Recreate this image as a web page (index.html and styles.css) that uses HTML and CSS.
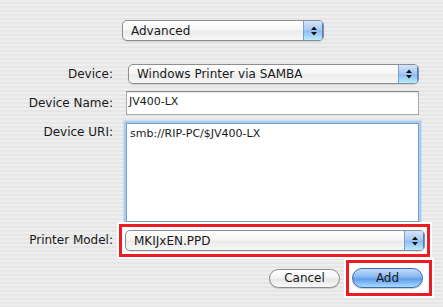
FILE: index.html
```html
<!DOCTYPE html>
<html>
<head>
<meta charset="utf-8">
<link rel="stylesheet" href="styles.css">
</head>
<body>
<div class="sheet">
  <div class="top-row">
    <div class="popup popup-advanced">
      <span class="popup-text">Advanced</span>
      <span class="popup-arrows"><svg width="8" height="12" viewBox="0 0 8 12"><path d="M4 1.5 L7 5 L1 5 Z M1 7 L7 7 L4 10.5 Z" fill="#111"/></svg></span>
    </div>
  </div>
  <div class="form">
    <div class="row row-device">
      <div class="label">Device:</div>
      <div class="popup popup-device">
        <span class="popup-text">Windows Printer via SAMBA</span>
        <span class="popup-arrows"><svg width="8" height="12" viewBox="0 0 8 12"><path d="M4 1.5 L7 5 L1 5 Z M1 7 L7 7 L4 10.5 Z" fill="#111"/></svg></span>
      </div>
    </div>
    <div class="row row-name">
      <div class="label">Device Name:</div>
      <div class="field">JV400-LX</div>
    </div>
    <div class="row row-uri">
      <div class="label">Device URI:</div>
      <div class="textarea">smb://RIP-PC/$JV400-LX</div>
    </div>
    <div class="row row-model">
      <div class="label">Printer Model:</div>
      <div class="annot annot-model">
        <div class="popup popup-model">
          <span class="popup-text">MKIJxEN.PPD</span>
          <span class="popup-arrows"><svg width="8" height="12" viewBox="0 0 8 12"><path d="M4 1.5 L7 5 L1 5 Z M1 7 L7 7 L4 10.5 Z" fill="#111"/></svg></span>
        </div>
      </div>
    </div>
  </div>
  <div class="buttons">
    <div class="btn btn-cancel">Cancel</div>
    <div class="annot annot-add">
      <div class="btn btn-add">Add</div>
    </div>
  </div>
</div>
</body>
</html>
```

FILE: styles.css
```css
* { box-sizing: border-box; }
html, body { margin: 0; padding: 0; }
body {
  width: 443px;
  height: 307px;
  overflow: hidden;
  font-family: "DejaVu Sans", "Liberation Sans", sans-serif;
  font-size: 12px;
  color: #1a1a1a;
  background: repeating-linear-gradient(to bottom, #eeeeee 0, #eeeeee 2px, #e6e6e6 2px, #e6e6e6 4px);
}
.sheet { padding-top: 20px; }

.top-row { display: flex; padding-left: 122px; }

.popup {
  display: flex;
  align-items: stretch;
  border: 1px solid #8e8e8e;
  border-radius: 5px;
  background: linear-gradient(to bottom, #ffffff 0%, #f6f6f6 45%, #ebebeb 55%, #f7f7f7 100%);
  box-shadow: 0 1px 1px rgba(0,0,0,0.12);
  overflow: hidden;
}
.popup-text {
  flex: 1;
  display: flex;
  align-items: center;
  padding-left: 8px;
  line-height: 14px;
  white-space: nowrap;
}
.popup-arrows {
  width: 20px;
  display: flex;
  align-items: center;
  justify-content: center;
  border-left: 1px solid #7b9ccc;
  background: linear-gradient(to bottom, #d3e5fa 0%, #a9cbf3 45%, #8fbdf0 55%, #b8ecff 100%);
  box-shadow: inset -1px 0 0 #4f7cc9;
}
.popup-advanced { width: 202px; height: 21px; }

.form { display: flex; flex-direction: column; }
.row { display: flex; align-items: center; }
.label { width: 113px; text-align: right; white-space: nowrap; line-height: 15px; }

.row-device { margin-top: 23px; }
.popup-device { margin-left: 15px; width: 291px; height: 20px; }

.row-name { margin-top: 7px; }
.field {
  margin-left: 13px;
  width: 293px;
  height: 24px;
  background: #fff;
  border: 1px solid #a9a9a9;
  border-top-color: #8a8a8a;
  box-shadow: inset 0 1px 1px rgba(0,0,0,0.1);
  font-size: 11px;
  line-height: 20px;
  padding-left: 2px;
}

.row-uri { margin-top: 8px; align-items: flex-start; }
.row-uri .label { padding-top: 2px; }
.textarea {
  margin-left: 13px;
  width: 293px;
  height: 99px;
  background: #fff;
  border: 1px solid #7d9fc6;
  box-shadow: 0 0 0 2px #a9cdee, 0 0 0 3px #c9def2;
  font-size: 11px;
  line-height: 14px;
  padding: 3px 3px;
}

.annot {
  border: 3px solid #ec1c24;
  background: #fff;
  box-shadow: 0 0 0 2px #ffffff;
}
.row-model { margin-top: 2px; }
.annot-model { margin-left: 6px; padding: 3px 2px 3px 3px; }
.popup-model { width: 300px; height: 21px; }

.buttons {
  display: flex;
  justify-content: flex-end;
  align-items: center;
  padding-right: 11px;
  margin-top: 3px;
  gap: 6px;
}
.btn {
  display: flex;
  align-items: center;
  justify-content: center;
  width: 71px;
  border-radius: 10px;
  line-height: 14px;
}
.btn-cancel {
  height: 19px;
  border: 1px solid #8c8c8c;
  background: linear-gradient(to bottom, #ffffff 0%, #f4f4f4 45%, #e6e6e6 55%, #fafafa 100%);
  box-shadow: 0 1px 1px rgba(0,0,0,0.15);
}
.annot-add { padding: 5px 6px 5px 3px; }
.btn-add {
  height: 20px;
  border: 1px solid #3b6bb8;
  background: linear-gradient(to bottom, #c4ddfa 0%, #86b7f0 45%, #5f9ded 55%, #a8dcff 100%);
  box-shadow: 0 1px 1px rgba(0,0,0,0.2);
}
```
